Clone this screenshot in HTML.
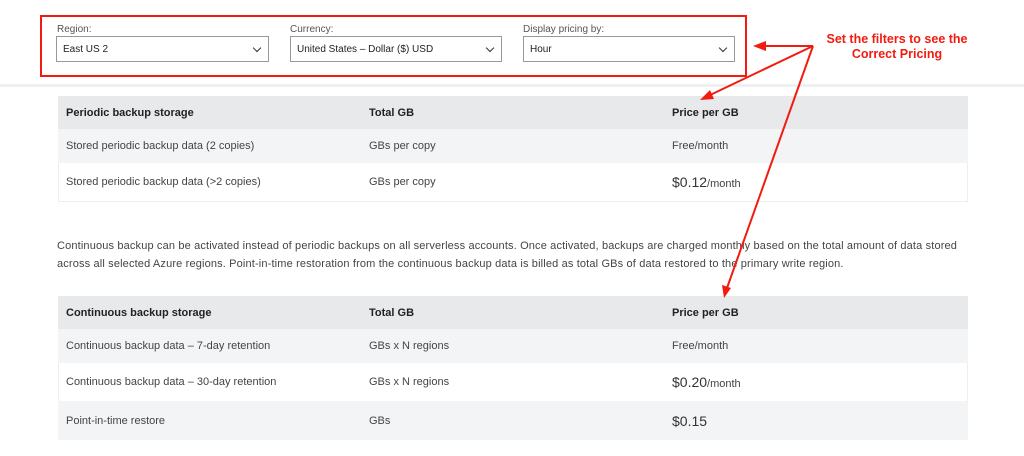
<!DOCTYPE html>
<html><head><meta charset="utf-8"><style>
*{margin:0;padding:0;box-sizing:border-box}
body{width:1024px;height:456px;background:#fff;font-family:"Liberation Sans",sans-serif;color:#333;position:relative;overflow:hidden}
.a{position:absolute}
.lbl{font-size:10px;color:#555}
.sel{position:absolute;height:26px;border:1px solid #999;background:#fff;font-size:10px;padding:7px 6px;color:#222}
.sel:after{content:"";position:absolute;right:8px;top:8px;width:5px;height:5px;border-right:1.5px solid #333;border-bottom:1.5px solid #333;transform:rotate(45deg)}
.row{position:absolute;left:58px;width:910px;font-size:11px;color:#444}
.row span{position:absolute;top:50%;transform:translateY(-50%)}
.h{background:#e8e9eb;font-weight:bold;color:#222}
.g{background:#f3f4f5}
.big{font-size:14px;color:#333}
.big small{font-size:11px;color:#444}
</style></head><body>
<div class="a" style="left:0;top:84px;width:1024px;height:3px;background:#eef0f2"></div>
<div class="a" style="left:40px;top:15px;width:707px;height:62px;border:2px solid #f21b0f"></div>
<div class="a lbl" style="left:57px;top:24px">Region:</div>
<div class="a lbl" style="left:290px;top:24px">Currency:</div>
<div class="a lbl" style="left:523px;top:24px">Display pricing by:</div>
<div class="sel" style="left:56px;top:36px;width:213px">East US 2</div>
<div class="sel" style="left:290px;top:36px;width:212px">United States – Dollar ($) USD</div>
<div class="sel" style="left:523px;top:36px;width:212px">Hour</div>
<div class="a" style="left:800px;top:32px;width:194px;text-align:center;font-size:12.5px;font-weight:bold;color:#f21b0f;line-height:15px">Set the filters to see the<br>Correct Pricing</div>

<div class="a" style="left:58px;top:96px;width:910px;height:106px;border:1px solid #eee"></div>
<div class="row h" style="top:96px;height:33px"><span style="left:8px">Periodic backup storage</span><span style="left:311px">Total GB</span><span style="left:614px">Price per GB</span></div>
<div class="row g" style="top:129px;height:34px"><span style="left:8px">Stored periodic backup data (2 copies)</span><span style="left:311px">GBs per copy</span><span style="left:614px">Free/month</span></div>
<div class="row" style="top:163px;height:38px"><span style="left:8px">Stored periodic backup data (&gt;2 copies)</span><span style="left:311px">GBs per copy</span><span style="left:614px" class="big">$0.12<small>/month</small></span></div>

<div class="a" style="left:57px;top:237px;white-space:nowrap;font-size:11px;line-height:18px;color:#444;letter-spacing:0.15px">Continuous backup can be activated instead of periodic backups on all serverless accounts. Once activated, backups are charged monthly based on the total amount of data stored<br>across all selected Azure regions. Point-in-time restoration from the continuous backup data is billed as total GBs of data restored to the primary write region.</div>

<div class="a" style="left:58px;top:296px;width:910px;height:144px;border:1px solid #eee"></div>
<div class="row h" style="top:296px;height:33px"><span style="left:8px">Continuous backup storage</span><span style="left:311px">Total GB</span><span style="left:614px">Price per GB</span></div>
<div class="row g" style="top:329px;height:34px"><span style="left:8px">Continuous backup data – 7-day retention</span><span style="left:311px">GBs x N regions</span><span style="left:614px">Free/month</span></div>
<div class="row" style="top:363px;height:38px"><span style="left:8px">Continuous backup data – 30-day retention</span><span style="left:311px">GBs x N regions</span><span style="left:614px" class="big">$0.20<small>/month</small></span></div>
<div class="row g" style="top:401px;height:39px"><span style="left:8px">Point-in-time restore</span><span style="left:311px">GBs</span><span style="left:614px" class="big">$0.15</span></div>

<svg class="a" style="left:0;top:0" width="1024" height="456">
<g stroke="#f21b0f" stroke-width="2" fill="#f21b0f">
<line x1="813" y1="46" x2="762" y2="46"/>
<polygon points="753,46 766,41 766,51" stroke="none"/>
<line x1="813" y1="46" x2="708" y2="96"/>
<polygon points="700,100 710,90 714,99" stroke="none"/>
<line x1="813" y1="46" x2="727" y2="288"/>
<polygon points="724,298 722,285 731,288" stroke="none"/>
</g></svg>
</body></html>
